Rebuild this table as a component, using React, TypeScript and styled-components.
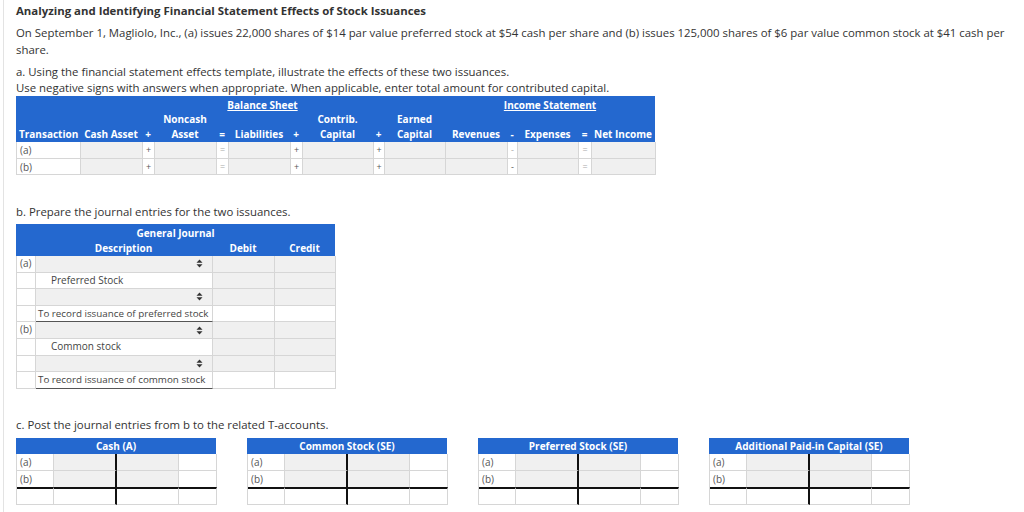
import React from 'react';
import styled, { createGlobalStyle } from 'styled-components';

const BLUE = '#2468cf';
const LINE = '#d6d6d6';
const FILL = '#f0f0f0';

const Global = createGlobalStyle`
  html, body { margin: 0; padding: 0; background: #fff; }
  body { font-family: "Open Sans", "Noto Sans", sans-serif; color: #333; }
  * { box-sizing: border-box; }
`;

const Page = styled.div`
  margin-left: 3px;
  border-left: 1px solid #e3e3e3;
  padding: 2px 0 8px 12px;
  min-height: 512px;
  display: flex;
  flex-direction: column;
  align-items: flex-start;
`;

const Title = styled.div`
  font-size: 11.4px;
  font-weight: 700;
  line-height: 17px;
  color: #333;
`;

const Para = styled.p<{ $mt: number; $lh: number }>`
  margin: ${(p) => p.$mt}px 0 0;
  font-size: 11.4px;
  line-height: ${(p) => p.$lh}px;
  color: #333;
  width: 1000px;
`;

/* ---------- Effects template ---------- */
const COLS = '64px 62px 12px 62px 12px 62px 12px 71px 11px 61px 62px 10px 61px 13px 64px';

const EffectsHead = styled.div`
  display: grid;
  grid-template-columns: ${COLS};
  grid-template-rows: 16px 30px;
  background: ${BLUE};
  color: #fff;
  font-size: 10px;
  font-weight: 700;
  width: 639px;
`;

const GroupTitle = styled.div<{ $from: number; $to: number }>`
  grid-row: 1;
  grid-column: ${(p) => p.$from} / ${(p) => p.$to};
  text-align: center;
  text-decoration: underline;
  line-height: 16px;
  padding-top: 1px;
`;

const HeadLabel = styled.div<{ $col: number; $align?: string }>`
  grid-row: 2;
  grid-column: ${(p) => p.$col};
  align-self: end;
  text-align: ${(p) => p.$align || 'center'};
  line-height: 15px;
  white-space: nowrap;
  padding-left: ${(p) => (p.$align === 'left' ? '3px' : '0')};
`;

const EffectsBody = styled.div`
  display: grid;
  grid-template-columns: ${COLS};
  grid-auto-rows: 16.5px;
  width: 639px;
  border-left: 1px solid ${LINE};
`;

const Cell = styled.div<{ $kind: 'label' | 'input' | 'op' | 'white'; $dim?: boolean }>`
  border-right: 1px solid ${LINE};
  border-bottom: 1px solid ${LINE};
  background: ${(p) => (p.$kind === 'input' ? FILL : '#fff')};
  font-size: ${(p) => (p.$kind === 'op' ? '9px' : '10px')};
  color: ${(p) => (p.$kind === 'op' ? (p.$dim ? '#aaa' : '#555') : '#555')};
  line-height: 16px;
  text-align: ${(p) => (p.$kind === 'op' ? 'center' : 'left')};
  padding-left: ${(p) => (p.$kind === 'label' ? '3px' : '0')};
  white-space: nowrap;
  overflow: hidden;
`;

/* ---------- Journal ---------- */
const JCOLS = '19px 177px 62px 61px';

const JournalHead = styled.div`
  display: grid;
  grid-template-columns: ${JCOLS};
  grid-template-rows: 16px 16px;
  width: 319px;
  background: ${BLUE};
  color: #fff;
  font-size: 10px;
  font-weight: 700;
  line-height: 16px;
  margin-top: 4px;
`;

const JTitle = styled.div`
  grid-row: 1;
  grid-column: 1 / 5;
  text-align: center;
  padding-top: 1px;
`;

const JLabel = styled.div<{ $col: number }>`
  grid-row: 2;
  grid-column: ${(p) => p.$col};
  text-align: center;
`;

const JournalBody = styled.div`
  display: grid;
  grid-template-columns: ${JCOLS};
  grid-auto-rows: 16.6px;
  width: 319px;
  border-left: 1px solid ${LINE};
`;

const JCell = styled.div<{ $fill?: boolean }>`
  border-right: 1px solid ${LINE};
  border-bottom: 1px solid ${LINE};
  background: ${(p) => (p.$fill ? FILL : '#fff')};
  font-size: 10px;
  color: #555;
  line-height: 15px;
  padding-left: 3px;
`;

const Desc = styled.div<{ $kind: 'select' | 'account' | 'memo' }>`
  border-right: 1px solid ${LINE};
  border-bottom: 1px solid ${(p) => (p.$kind === 'memo' ? '#555' : LINE)};
  background: ${(p) => (p.$kind === 'select' ? FILL : '#fff')};
  font-size: ${(p) => (p.$kind === 'memo' ? '9.8px' : '10px')};
  color: #444;
  line-height: 15px;
  padding-left: ${(p) => (p.$kind === 'account' ? '15px' : '2px')};
  padding-right: 9px;
  display: flex;
  align-items: center;
  justify-content: ${(p) => (p.$kind === 'select' ? 'flex-end' : 'flex-start')};
  white-space: nowrap;
`;

const Arrows = () => (
  <svg width="7" height="9" viewBox="0 0 7 9">
    <path d="M3.5 0.5 L6.5 3.8 L0.5 3.8 Z" fill="#333" />
    <path d="M3.5 8.5 L6.5 5.2 L0.5 5.2 Z" fill="#333" />
  </svg>
);

/* ---------- T accounts ---------- */
const TRow = styled.div`
  display: flex;
  gap: 31px;
  margin-top: 5px;
`;

const TBox = styled.div`
  width: 200px;
`;

const THead = styled.div`
  background: ${BLUE};
  color: #fff;
  font-size: 10px;
  font-weight: 700;
  line-height: 16px;
  height: 16px;
  text-align: center;
`;

const TGrid = styled.div`
  display: grid;
  grid-template-columns: 37px 63px 62px 38px;
  grid-auto-rows: 17px;
  border-left: 1px solid ${LINE};
`;

const TCell = styled.div<{ $fill?: boolean; $split?: boolean; $total?: boolean }>`
  border-right: ${(p) => (p.$split ? '2px solid #111' : `1px solid ${LINE}`)};
  border-bottom: 1px solid ${LINE};
  border-top: ${(p) => (p.$total ? '2px solid #111' : 'none')};
  margin-top: ${(p) => (p.$total ? '-1px' : '0')};
  background: ${(p) => (p.$fill ? FILL : '#fff')};
  font-size: 10px;
  color: #555;
  line-height: 16px;
  padding-left: 3px;
`;

const TAccount = ({ name }: { name: string }) => (
  <TBox>
    <THead>{name}</THead>
    <TGrid>
      {['(a)', '(b)'].map((l) => (
        <React.Fragment key={l}>
          <TCell>{l}</TCell>
          <TCell $fill $split />
          <TCell $fill />
          <TCell />
        </React.Fragment>
      ))}
      <TCell $total />
      <TCell $total $split />
      <TCell $total />
      <TCell $total />
    </TGrid>
  </TBox>
);

const EffectRow = ({ label, minusDim }: { label: string; minusDim: boolean }) => (
  <>
    <Cell $kind="label">{label}</Cell>
    <Cell $kind="input" />
    <Cell $kind="op">+</Cell>
    <Cell $kind="input" />
    <Cell $kind="op" $dim>=</Cell>
    <Cell $kind="input" />
    <Cell $kind="op">+</Cell>
    <Cell $kind="input" />
    <Cell $kind="op">+</Cell>
    <Cell $kind="input" />
    <Cell $kind="input" />
    <Cell $kind="op" $dim={minusDim}>-</Cell>
    <Cell $kind="input" />
    <Cell $kind="op" $dim>=</Cell>
    <Cell $kind="input" />
  </>
);

type JRow = { label?: string; kind: 'select' | 'account' | 'memo'; text?: string };

const journalRows: JRow[] = [
  { label: '(a)', kind: 'select' },
  { kind: 'account', text: 'Preferred Stock' },
  { kind: 'select' },
  { kind: 'memo', text: 'To record issuance of preferred stock' },
  { label: '(b)', kind: 'select' },
  { kind: 'account', text: 'Common stock' },
  { kind: 'select' },
  { kind: 'memo', text: 'To record issuance of common stock' },
];

export default function App() {
  return (
    <>
      <Global />
      <Page>
        <Title>Analyzing and Identifying Financial Statement Effects of Stock Issuances</Title>
        <Para $mt={5} $lh={17}>
          On September 1, Magliolo, Inc., (a) issues 22,000 shares of $14 par value preferred stock at $54 cash per share and (b) issues 125,000 shares of $6 par value common stock at $41 cash per share.
        </Para>
        <Para $mt={6} $lh={16}>
          a. Using the financial statement effects template, illustrate the effects of these two issuances.
          <br />
          Use negative signs with answers when appropriate. When applicable, enter total amount for contributed capital.
        </Para>

        <EffectsHead>
          <GroupTitle $from={2} $to={11}>Balance Sheet</GroupTitle>
          <GroupTitle $from={11} $to={16}>Income Statement</GroupTitle>
          <HeadLabel $col={1} $align="left">Transaction</HeadLabel>
          <HeadLabel $col={2}>Cash Asset</HeadLabel>
          <HeadLabel $col={3}>+</HeadLabel>
          <HeadLabel $col={4}>Noncash<br />Asset</HeadLabel>
          <HeadLabel $col={5}>=</HeadLabel>
          <HeadLabel $col={6}>Liabilities</HeadLabel>
          <HeadLabel $col={7}>+</HeadLabel>
          <HeadLabel $col={8}>Contrib.<br />Capital</HeadLabel>
          <HeadLabel $col={9}>+</HeadLabel>
          <HeadLabel $col={10}>Earned<br />Capital</HeadLabel>
          <HeadLabel $col={11}>Revenues</HeadLabel>
          <HeadLabel $col={12}>-</HeadLabel>
          <HeadLabel $col={13}>Expenses</HeadLabel>
          <HeadLabel $col={14}>=</HeadLabel>
          <HeadLabel $col={15}>Net Income</HeadLabel>
        </EffectsHead>
        <EffectsBody>
          <EffectRow label="(a)" minusDim />
          <EffectRow label="(b)" minusDim={false} />
        </EffectsBody>

        <Para $mt={28} $lh={17}>b. Prepare the journal entries for the two issuances.</Para>
        <JournalHead>
          <JTitle>General Journal</JTitle>
          <JLabel $col={2}>Description</JLabel>
          <JLabel $col={3}>Debit</JLabel>
          <JLabel $col={4}>Credit</JLabel>
        </JournalHead>
        <JournalBody>
          {journalRows.map((r, i) => (
            <React.Fragment key={i}>
              <JCell>{r.label}</JCell>
              <Desc $kind={r.kind}>{r.kind === 'select' ? <Arrows /> : r.text}</Desc>
              <JCell $fill={r.kind !== 'memo'} />
              <JCell $fill={r.kind !== 'memo'} />
            </React.Fragment>
          ))}
        </JournalBody>

        <Para $mt={27} $lh={17}>c. Post the journal entries from b to the related T-accounts.</Para>
        <TRow>
          <TAccount name="Cash (A)" />
          <TAccount name="Common Stock (SE)" />
          <TAccount name="Preferred Stock (SE)" />
          <TAccount name="Additional Paid-in Capital (SE)" />
        </TRow>
      </Page>
    </>
  );
}
